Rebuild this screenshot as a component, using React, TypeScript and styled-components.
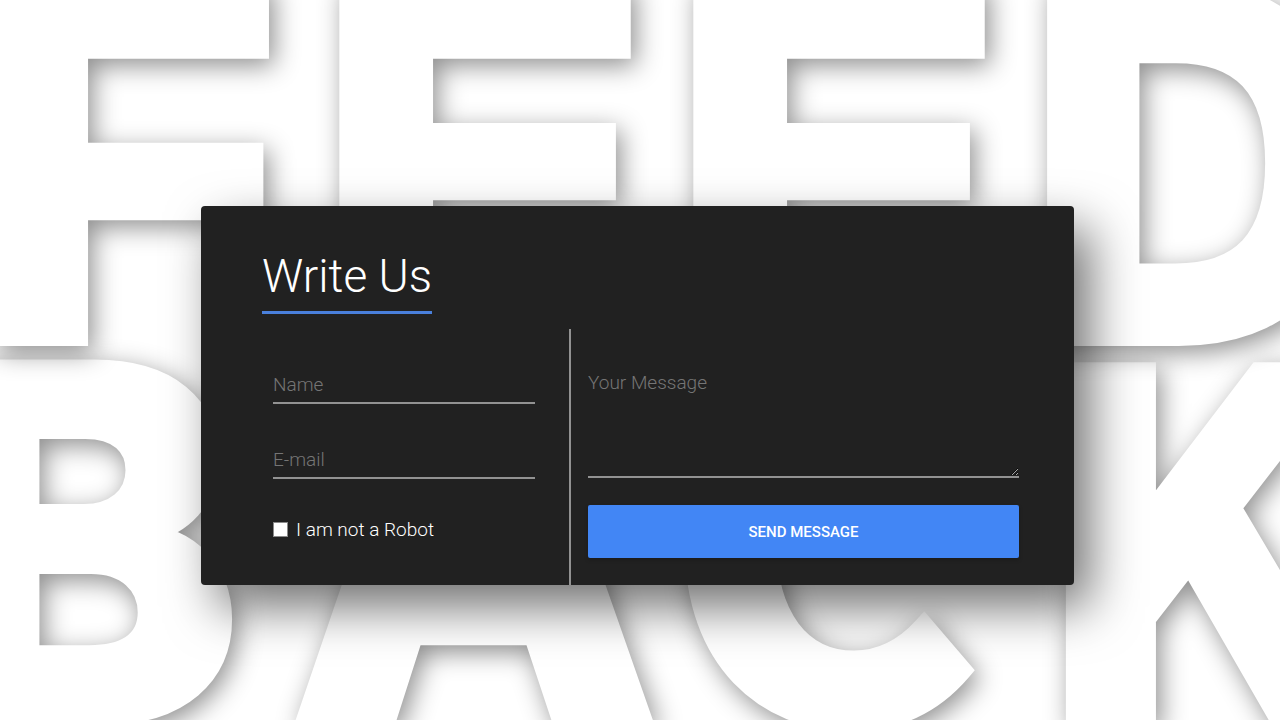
import React from "react";
import styled, { createGlobalStyle } from "styled-components";

const GlobalStyle = createGlobalStyle`
  *, *::before, *::after {
    box-sizing: border-box;
  }
  body {
    margin: 0;
    background: #ffffff;
    font-family: Roboto, "Liberation Sans", sans-serif;
  }
`;

const Page = styled.main`
  position: relative;
  min-height: 100vh;
  padding: 206px 206px 134px 201px;
  overflow: hidden;
`;

const Backdrop = styled.div`
  position: absolute;
  inset: -25px 0 0 0;
  overflow: hidden;
  user-select: none;
  font-weight: 700;
  color: #ffffff;
  -webkit-text-stroke: 22px #ffffff;
`;

const WordRow = styled.div<{ $start: number; $level: number }>`
  position: relative;
  z-index: ${(p) => p.$level};
  display: flex;
  align-items: baseline;
  height: 380px;
  margin-left: ${(p) => p.$start}px;
  filter: drop-shadow(5px 7px 13px rgba(0, 0, 0, 0.44));
`;

const faces = {
  wide: `498px/376px "Liberation Sans", Arial, sans-serif`,
  round: `472px/376px Inter, sans-serif`,
  angular: `460px/300px "Noto Sans CJK SC", sans-serif`,
};

const Letter = styled.span<{ $advance: number; $face?: keyof typeof faces }>`
  flex: none;
  width: ${(p) => p.$advance}px;
  font: 700 ${(p) => faces[p.$face ?? "wide"]};
`;

const Card = styled.form`
  position: relative;
  z-index: 3;
  border-radius: 4px;
  background: #212121;
  box-shadow: 16px 22px 50px rgba(0, 0, 0, 0.56);
`;

const Heading = styled.h1`
  width: fit-content;
  margin: 0 0 0 61px;
  padding: 39px 0 4px;
  border-bottom: 3px solid #4a80dc;
  font-size: 46px;
  font-weight: 300;
  line-height: 62px;
  color: #ffffff;
`;

const Columns = styled.div`
  display: flex;
  margin-top: 15px;
`;

const Identity = styled.div`
  display: flex;
  flex-direction: column;
  flex: 0 0 370px;
  padding: 37px 34px 40px 72px;
  border-right: 2px solid #929292;
`;

const TextField = styled.input`
  width: 100%;
  height: 38px;
  margin-bottom: 37px;
  padding: 0;
  border: 0;
  border-bottom: 2px solid #929292;
  border-radius: 0;
  outline: 0;
  background: transparent;
  color: #ffffff;
  font: 300 19px/32px Roboto, "Liberation Sans", sans-serif;
  &::placeholder {
    color: #757575;
    opacity: 1;
  }
`;

const RobotCheck = styled.label`
  display: flex;
  align-items: center;
  gap: 8px;
  height: 28px;
  color: #ffffff;
  font-size: 19px;
  font-weight: 300;
  line-height: 28px;
`;

const CheckBox = styled.input`
  appearance: none;
  width: 15px;
  height: 15px;
  margin: 0 0 2px;
  border: 1px solid #8a8a8a;
  background: #ffffff;
  &:checked {
    background: #4286f5;
  }
`;

const Message = styled.div`
  display: flex;
  flex-direction: column;
  flex: 1;
  min-width: 0;
  padding: 38px 55px 27px 17px;
`;

const MessageBox = styled.textarea`
  display: block;
  width: 100%;
  height: 111px;
  padding: 4px 0 0;
  border: 0;
  border-bottom: 2px solid #929292;
  outline: 0;
  resize: vertical;
  background: transparent;
  color: #ffffff;
  font: 300 19px/24px Roboto, "Liberation Sans", sans-serif;
  &::placeholder {
    color: #757575;
    opacity: 1;
  }
`;

const SendButton = styled.button`
  width: 100%;
  height: 53px;
  margin-top: 27px;
  padding: 0;
  border: 0;
  border-radius: 2px;
  background: #4286f5;
  box-shadow: 0 2px 4px rgba(0, 0, 0, 0.2);
  color: #ffffff;
  font: 500 15px/20px Roboto, "Liberation Sans", sans-serif;
  text-transform: uppercase;
  cursor: pointer;
`;

export default function App() {
  return (
    <>
      <GlobalStyle />
      <Page>
        <Backdrop aria-hidden="true">
          <WordRow $start={-28} $level={2}>
            <Letter $advance={345}>F</Letter>
            <Letter $advance={354}>E</Letter>
            <Letter $advance={356}>E</Letter>
            <Letter $advance={354} $face="round">D</Letter>
          </WordRow>
          <WordRow $start={-73} $level={1}>
            <Letter $advance={371} $face="round">B</Letter>
            <Letter $advance={373} $face="round">A</Letter>
            <Letter $advance={364} $face="angular">C</Letter>
            <Letter $advance={354} $face="angular">K</Letter>
          </WordRow>
        </Backdrop>
        <Card onSubmit={(event) => event.preventDefault()}>
          <Heading>Write Us</Heading>
          <Columns>
            <Identity>
              <TextField type="text" name="name" placeholder="Name" aria-label="Name" />
              <TextField type="email" name="email" placeholder="E-mail" aria-label="E-mail" />
              <RobotCheck>
                <CheckBox type="checkbox" name="human" />
                I am not a Robot
              </RobotCheck>
            </Identity>
            <Message>
              <MessageBox name="message" placeholder="Your Message" aria-label="Your Message" />
              <SendButton type="submit">Send message</SendButton>
            </Message>
          </Columns>
        </Card>
      </Page>
    </>
  );
}
